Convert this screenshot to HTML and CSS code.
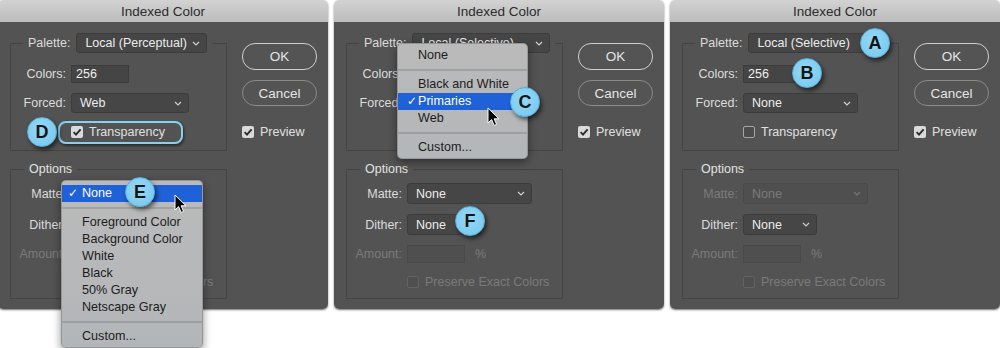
FILE: index.html
```html
<!DOCTYPE html>
<html>
<head>
<meta charset="utf-8">
<link rel="stylesheet" href="styles.css">
</head>
<body>
<div class="screen">

  <!-- Dialog 1 -->
  <section class="dlg dlg-1">
    <header class="titlebar">Indexed Color</header>
    <div class="dbody">
      <div class="col-main">
        <fieldset class="grp grp-palette">
          <legend class="legend-row"><span class="lbl">Palette:</span><span class="select sel-palette sel-palette-1">Local (Perceptual)<svg class="chev" viewBox="0 0 8 5"><path d="M1 1 L4 4 L7 1"/></svg></span></legend>
          <div class="rows">
            <span class="lbl">Colors:</span><span class="input in-colors">256</span>
            <span class="lbl">Forced:</span><span class="select sel-forced sel-forced-1">Web<svg class="chev" viewBox="0 0 8 5"><path d="M1 1 L4 4 L7 1"/></svg></span>
            <span></span><span class="check-row"><span class="cb on"><svg viewBox="0 0 12 12"><path d="M2.6 6.2 L5 8.6 L9.6 3.4"/></svg></span>Transparency</span>
          </div>
        </fieldset>
        <fieldset class="grp grp-options">
          <legend class="legend-text">Options</legend>
          <div class="rows rows-opt">
            <span class="lbl">Matte:</span><span class="select sel-matte"><span class="covered">None</span><svg class="chev" viewBox="0 0 8 5"><path d="M1 1 L4 4 L7 1"/></svg></span>
            <span class="lbl">Dither:</span><span class="select sel-dither"><span class="covered">None</span><svg class="chev" viewBox="0 0 8 5"><path d="M1 1 L4 4 L7 1"/></svg></span>
            <span class="lbl dis">Amount:</span><span class="amount"><span class="input in-amount dis-box"></span><span class="pct dis covered">%</span></span>
            <span></span><span class="check-row dis"><span class="cb off dis-cb"></span>Preserve Exact Colors</span>
          </div>
        </fieldset>
      </div>
      <div class="col-side">
        <button class="btn btn-default">OK</button>
        <button class="btn">Cancel</button>
        <span class="check-row preview"><span class="cb on"><svg viewBox="0 0 12 12"><path d="M2.6 6.2 L5 8.6 L9.6 3.4"/></svg></span>Preview</span>
      </div>
    </div>

    <div class="focus-ring ring-1"></div>
    <div class="menu menu-1">
      <div class="mi hl"><span class="tick">✓</span>None</div>
      <div class="msep"></div>
      <div class="mi">Foreground Color</div>
      <div class="mi">Background Color</div>
      <div class="mi">White</div>
      <div class="mi">Black</div>
      <div class="mi">50% Gray</div>
      <div class="mi">Netscape Gray</div>
      <div class="msep"></div>
      <div class="mi">Custom...</div>
    </div>
    <div class="badge badge-d">D</div>
    <div class="badge badge-e">E</div>
    <svg class="cursor cursor-1" viewBox="0 0 13 20"><path d="M1 1 L1 16 L4.6 12.6 L7.2 18.4 L9.6 17.4 L7.1 11.8 L12 11.8 Z"/></svg>
  </section>

  <!-- Dialog 2 -->
  <section class="dlg dlg-2">
    <header class="titlebar">Indexed Color</header>
    <div class="dbody">
      <div class="col-main">
        <fieldset class="grp grp-palette">
          <legend class="legend-row"><span class="lbl">Palette:</span><span class="select sel-palette">Local (Selective)<svg class="chev" viewBox="0 0 8 5"><path d="M1 1 L4 4 L7 1"/></svg></span></legend>
          <div class="rows">
            <span class="lbl">Colors:</span><span class="input in-colors"><span class="covered">256</span></span>
            <span class="lbl">Forced:</span><span class="select sel-forced"><span class="covered">Primaries</span><svg class="chev" viewBox="0 0 8 5"><path d="M1 1 L4 4 L7 1"/></svg></span>
            <span></span><span class="check-row"><span class="cb on"><svg viewBox="0 0 12 12"><path d="M2.6 6.2 L5 8.6 L9.6 3.4"/></svg></span><span class="covered">Transparency</span></span>
          </div>
        </fieldset>
        <fieldset class="grp grp-options">
          <legend class="legend-text">Options</legend>
          <div class="rows rows-opt">
            <span class="lbl">Matte:</span><span class="select sel-matte">None<svg class="chev" viewBox="0 0 8 5"><path d="M1 1 L4 4 L7 1"/></svg></span>
            <span class="lbl">Dither:</span><span class="select sel-dither">None<svg class="chev" viewBox="0 0 8 5"><path d="M1 1 L4 4 L7 1"/></svg></span>
            <span class="lbl dis">Amount:</span><span class="amount"><span class="input in-amount dis-box"></span><span class="pct dis">%</span></span>
            <span></span><span class="check-row dis"><span class="cb off dis-cb"></span>Preserve Exact Colors</span>
          </div>
        </fieldset>
      </div>
      <div class="col-side">
        <button class="btn btn-default">OK</button>
        <button class="btn">Cancel</button>
        <span class="check-row preview"><span class="cb on"><svg viewBox="0 0 12 12"><path d="M2.6 6.2 L5 8.6 L9.6 3.4"/></svg></span>Preview</span>
      </div>
    </div>

    <div class="menu menu-2">
      <div class="mi">None</div>
      <div class="msep"></div>
      <div class="mi">Black and White</div>
      <div class="mi hl"><span class="tick">✓</span>Primaries</div>
      <div class="mi">Web</div>
      <div class="msep"></div>
      <div class="mi">Custom...</div>
    </div>
    <div class="badge badge-c">C</div>
    <div class="badge badge-f">F</div>
    <svg class="cursor cursor-2" viewBox="0 0 13 20"><path d="M1 1 L1 16 L4.6 12.6 L7.2 18.4 L9.6 17.4 L7.1 11.8 L12 11.8 Z"/></svg>
  </section>

  <!-- Dialog 3 -->
  <section class="dlg dlg-3">
    <header class="titlebar">Indexed Color</header>
    <div class="dbody">
      <div class="col-main">
        <fieldset class="grp grp-palette">
          <legend class="legend-row"><span class="lbl">Palette:</span><span class="select sel-palette">Local (Selective)<svg class="chev" viewBox="0 0 8 5"><path d="M1 1 L4 4 L7 1"/></svg></span></legend>
          <div class="rows">
            <span class="lbl">Colors:</span><span class="input in-colors">256</span>
            <span class="lbl">Forced:</span><span class="select sel-forced sel-forced-3">None<svg class="chev" viewBox="0 0 8 5"><path d="M1 1 L4 4 L7 1"/></svg></span>
            <span></span><span class="check-row"><span class="cb off"></span>Transparency</span>
          </div>
        </fieldset>
        <fieldset class="grp grp-options">
          <legend class="legend-text">Options</legend>
          <div class="rows rows-opt">
            <span class="lbl dis">Matte:</span><span class="select sel-matte sel-dis">None<svg class="chev" viewBox="0 0 8 5"><path d="M1 1 L4 4 L7 1"/></svg></span>
            <span class="lbl">Dither:</span><span class="select sel-dither">None<svg class="chev" viewBox="0 0 8 5"><path d="M1 1 L4 4 L7 1"/></svg></span>
            <span class="lbl dis">Amount:</span><span class="amount"><span class="input in-amount dis-box"></span><span class="pct dis">%</span></span>
            <span></span><span class="check-row dis"><span class="cb off dis-cb"></span>Preserve Exact Colors</span>
          </div>
        </fieldset>
      </div>
      <div class="col-side">
        <button class="btn btn-default">OK</button>
        <button class="btn">Cancel</button>
        <span class="check-row preview"><span class="cb on"><svg viewBox="0 0 12 12"><path d="M2.6 6.2 L5 8.6 L9.6 3.4"/></svg></span>Preview</span>
      </div>
    </div>

    <div class="badge badge-a">A</div>
    <div class="badge badge-b">B</div>
  </section>

</div>
</body>
</html>
```

FILE: styles.css
```css
html, body {
  margin: 0;
  padding: 0;
  background: #ffffff;
}

body {
  font-family: "Liberation Sans", Arial, sans-serif;
  font-size: 12.5px;
  color: #dedede;
  width: 1000px;
  height: 348px;
  overflow: hidden;
}

.screen {
  display: flex;
  gap: 6px;
  margin-left: -2px;
}

/* text that sits fully under an open menu or badge */
.covered {
  visibility: hidden;
}

/* ---------- dialog frame ---------- */
.dlg {
  position: relative;
  width: 330px;
  height: 309px;
  flex: none;
  display: flex;
  flex-direction: column;
  border-radius: 5px;
  box-shadow: 0 1px 2px rgba(0, 0, 0, 0.55);
}

.titlebar {
  height: 22px;
  flex: none;
  border-radius: 5px 5px 0 0;
  background: linear-gradient(#d2d2d2, #bcbcbc);
  color: #2c2c2c;
  font-size: 13.5px;
  line-height: 23px;
  text-align: center;
}

.dbody {
  flex: 1;
  display: flex;
  gap: 15px;
  background: #535353;
  border-radius: 0 0 5px 5px;
  padding-left: 12px;
}

.col-main {
  width: 217px;
  flex: none;
  padding-top: 11px;
}

/* ---------- group boxes ---------- */
.grp {
  margin: 0;
  border: 1px solid #444444;
  padding: 12px 0 9px 0;
  min-width: 0;
}

.legend-row {
  display: flex;
  align-items: center;
  gap: 6px;
  margin-left: 12px;
  padding: 0 5px;
  height: 20px;
}

.grp-options {
  margin-top: 10px;
  padding: 6px 0 7px 0;
}

.legend-text {
  margin-left: 13px;
  padding: 0 5px;
  line-height: 16px;
  color: #e2e2e2;
}

.rows {
  display: grid;
  grid-template-columns: 55px 1fr;
  grid-template-rows: 18px 20px 18px;
  column-gap: 5px;
  row-gap: 10px;
  align-items: center;
}

.rows-opt {
  grid-template-rows: 21px 21px 18px 18px;
  row-gap: 10px;
}

.lbl {
  text-align: right;
  color: #dcdcdc;
  white-space: nowrap;
}

.dis {
  color: #7b7b7b;
}

/* ---------- controls ---------- */
.select {
  position: relative;
  display: flex;
  align-items: center;
  box-sizing: border-box;
  height: 20px;
  padding-left: 8px;
  background: #464646;
  border: 1px solid #3c3c3c;
  border-radius: 3px;
  color: #ececec;
  white-space: nowrap;
}

.chev {
  position: absolute;
  right: 6px;
  top: 7px;
  width: 8px;
  height: 5px;
  fill: none;
  stroke: #cfcfcf;
  stroke-width: 1.2;
}

.sel-palette { width: 138px; }
.sel-palette-1 { width: 131px; }
.sel-forced { width: 116px; }
.sel-forced-1 { width: 118px; }
.sel-forced-3 { width: 115px; }
.sel-matte { width: 125px; height: 21px; }
.sel-dither { width: 74px; height: 21px; }

.sel-dis {
  background: #4f4f4f;
  border-color: #494949;
  color: #7a7a7a;
}
.sel-dis .chev { stroke: #777777; }

.input {
  display: flex;
  align-items: center;
  box-sizing: border-box;
  height: 18px;
  padding-left: 4px;
  background: #454545;
  border: 1px solid #3b3b3b;
  color: #f0f0f0;
}

.in-colors { width: 58px; }
.in-amount { width: 58px; }

.dis-box {
  background: #4f4f4f;
  border-color: #494949;
}

.amount {
  display: flex;
  align-items: center;
  gap: 10px;
}

.pct { line-height: 18px; }

.check-row {
  display: flex;
  align-items: center;
  gap: 6px;
  height: 18px;
  white-space: nowrap;
  color: #e0e0e0;
}
.check-row.dis { color: #7a7a7a; }

.cb {
  box-sizing: border-box;
  width: 12px;
  height: 12px;
  flex: none;
  border-radius: 2px;
}
.cb svg {
  display: block;
  width: 12px;
  height: 12px;
  fill: none;
  stroke: #2a2a2a;
  stroke-width: 1.9;
}
.cb.on {
  background: #dadada;
}
.cb.off {
  border: 1px solid #a6a6a6;
  background: #4c4c4c;
}
.cb.dis-cb {
  border-color: #626262;
  background: #4f4f4f;
}

/* ---------- side column ---------- */
.col-side {
  display: flex;
  flex-direction: column;
  align-items: flex-start;
  padding-top: 21px;
}

.btn {
  box-sizing: border-box;
  width: 75px;
  height: 26px;
  margin: 0;
  padding: 0;
  background: #545454;
  border: 1px solid #8a8a8a;
  border-radius: 13px;
  color: #e4e4e4;
  font-family: "Liberation Sans", Arial, sans-serif;
  font-size: 13.5px;
}

.btn-default {
  height: 27px;
  border: 1.5px solid #d0d0d0;
  margin-bottom: 10px;
}

.preview {
  margin-top: 17px;
}

/* ---------- overlays ---------- */
.focus-ring {
  position: absolute;
  box-sizing: border-box;
  border: 2px solid #86d0f0;
  border-radius: 8px;
  box-shadow: 1px 2px 3px rgba(0, 0, 0, 0.5);
}
.ring-1 { left: 60px; top: 121px; width: 125px; height: 23px; }

.menu {
  position: absolute;
  box-sizing: border-box;
  background: linear-gradient(#bababa, #b3b6b9);
  border: 1px solid rgba(0, 0, 0, 0.18);
  border-radius: 5px;
  box-shadow: 0 3px 8px rgba(0, 0, 0, 0.45);
  color: #1c1c1c;
  font-size: 12.6px;
  padding: 3px 0 2px 0;
}
.menu-1 { left: 63px; top: 180px; width: 142px; padding-top: 4px; }
.menu-2 { left: 63px; top: 43px; width: 131px; }

.mi {
  position: relative;
  height: 17px;
  line-height: 17px;
  padding-left: 20px;
  white-space: nowrap;
}
.mi.hl {
  background: #1f61d6;
  color: #ffffff;
}
.tick {
  position: absolute;
  left: 6px;
  top: 0;
  font-family: "DejaVu Sans", sans-serif;
  font-size: 12px;
}
.menu-2 .tick { left: 9px; }

.msep {
  height: 12px;
  display: flex;
  align-items: center;
}
.msep::before {
  content: "";
  display: block;
  width: 100%;
  height: 2px;
  background: rgba(0, 0, 0, 0.13);
}

.badge {
  position: absolute;
  box-sizing: border-box;
  width: 30px;
  height: 30px;
  border-radius: 50%;
  background: radial-gradient(circle at 45% 40%, #96d9f6, #72c6ee);
  border: 1px solid #5aaed8;
  box-shadow: 2px 3px 4px rgba(0, 0, 0, 0.55);
  color: #151515;
  font-family: "Liberation Sans", Arial, sans-serif;
  font-weight: bold;
  font-size: 18px;
  line-height: 28px;
  text-align: center;
}
.badge-d { left: 29px; top: 117px; }
.badge-e { left: 127px; top: 177px; }
.badge-c { left: 176px; top: 87px; }
.badge-f { left: 121px; top: 206px; }
.badge-a { left: 190px; top: 28px; }
.badge-b { left: 122px; top: 58px; }

.cursor {
  position: absolute;
  width: 13px;
  height: 20px;
  fill: #000000;
  stroke: #ffffff;
  stroke-width: 1;
  stroke-linejoin: round;
}
.cursor-1 { left: 176px; top: 194px; }
.cursor-2 { left: 153px; top: 107px; }
```
